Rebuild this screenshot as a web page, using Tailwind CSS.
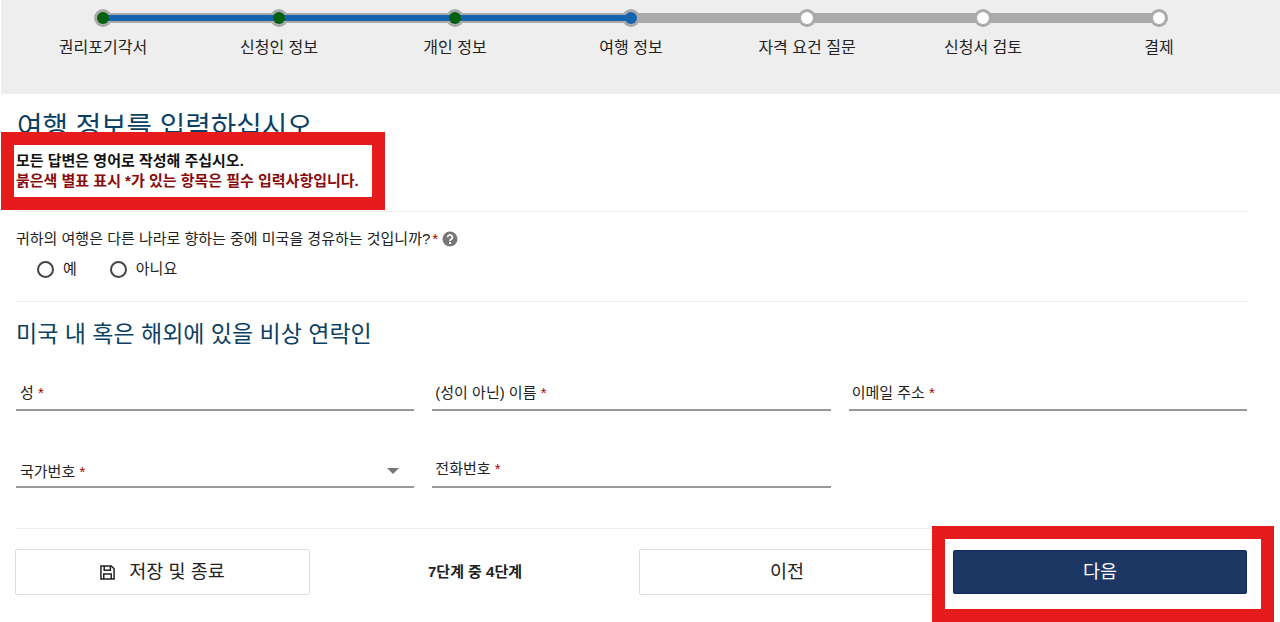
<!doctype html>
<html lang="ko">
    <head>
        <meta charset="UTF-8" />
        <meta name="viewport" content="width=device-width, initial-scale=1.0" />
        <title>여행 정보</title>
        <script src="https://cdn.jsdelivr.net/npm/@tailwindcss/browser@4"></script>
    </head>

    <body class="relative h-[622px] overflow-hidden bg-white font-['Liberation_Sans','Noto_Sans_CJK_KR',sans-serif] text-[#222]">
        <!-- stepper -->
        <div class="ml-px h-[94px] bg-[#eeeeee] pl-[14px] pr-[33px] pt-[9px]">
            <div class="grid grid-cols-7 text-center text-[16px]">
                <div class="relative">
                    <div class="absolute left-1/2 top-[4px] h-[10px] w-full bg-[#aaaaaa]"></div>
                    <div class="relative mx-auto flex h-[18px] w-[18px] items-center justify-center rounded-full bg-[#aaaaaa]"><div class="relative z-20 h-[12px] w-[12px] rounded-full bg-[#066010]"></div></div>
                    <div class="absolute left-1/2 top-[6px] z-10 h-[6px] w-full bg-[#1464ae]"></div>
                    <div class="mt-[11px] leading-[20px]">권리포기각서</div>
                </div>
                <div class="relative">
                    <div class="absolute left-1/2 top-[4px] h-[10px] w-full bg-[#aaaaaa]"></div>
                    <div class="relative mx-auto flex h-[18px] w-[18px] items-center justify-center rounded-full bg-[#aaaaaa]"><div class="relative z-20 h-[12px] w-[12px] rounded-full bg-[#066010]"></div></div>
                    <div class="absolute left-1/2 top-[6px] z-10 h-[6px] w-full bg-[#1464ae]"></div>
                    <div class="mt-[11px] leading-[20px]">신청인 정보</div>
                </div>
                <div class="relative">
                    <div class="absolute left-1/2 top-[4px] h-[10px] w-full bg-[#aaaaaa]"></div>
                    <div class="relative mx-auto flex h-[18px] w-[18px] items-center justify-center rounded-full bg-[#aaaaaa]"><div class="relative z-20 h-[12px] w-[12px] rounded-full bg-[#066010]"></div></div>
                    <div class="absolute left-1/2 top-[6px] z-10 h-[6px] w-full bg-[#1464ae]"></div>
                    <div class="mt-[11px] leading-[20px]">개인 정보</div>
                </div>
                <div class="relative">
                    <div class="absolute left-1/2 top-[4px] h-[10px] w-full bg-[#aaaaaa]"></div>
                    <div class="relative mx-auto flex h-[18px] w-[18px] items-center justify-center rounded-full bg-[#aaaaaa]"><div class="relative z-20 h-[12px] w-[12px] rounded-full bg-[#1464ae]"></div></div>
                    <div class="mt-[11px] leading-[20px]">여행 정보</div>
                </div>
                <div class="relative">
                    <div class="absolute left-1/2 top-[4px] h-[10px] w-full bg-[#aaaaaa]"></div>
                    <div class="relative mx-auto flex h-[18px] w-[18px] items-center justify-center rounded-full bg-[#aaaaaa]"><div class="h-[12px] w-[12px] rounded-full bg-white"></div></div>
                    <div class="mt-[11px] leading-[20px]">자격 요건 질문</div>
                </div>
                <div class="relative">
                    <div class="absolute left-1/2 top-[4px] h-[10px] w-full bg-[#aaaaaa]"></div>
                    <div class="relative mx-auto flex h-[18px] w-[18px] items-center justify-center rounded-full bg-[#aaaaaa]"><div class="h-[12px] w-[12px] rounded-full bg-white"></div></div>
                    <div class="mt-[11px] leading-[20px]">신청서 검토</div>
                </div>
                <div class="relative">
                    <div class="relative mx-auto flex h-[18px] w-[18px] items-center justify-center rounded-full bg-[#aaaaaa]"><div class="h-[12px] w-[12px] rounded-full bg-white"></div></div>
                    <div class="mt-[11px] leading-[20px]">결제</div>
                </div>
            </div>
        </div>

        <div class="pl-4 pr-[33px]">
            <h1 class="pl-px pt-[16px] text-[27.7px] leading-[34px] text-[#0b3f63]">여행 정보를 입력하십시오</h1>

            <div class="relative z-10 mt-[7px] text-[15px] font-bold leading-[20px]">
                <p class="text-[#111]">모든 답변은 영어로 작성해 주십시오.</p>
                <p class="text-[#8a0b0b]">붉은색 별표 표시 *가 있는 항목은 필수 입력사항입니다.</p>
            </div>

            <hr class="-mr-px mt-[20px] border-[#eeeeee]" />

            <div class="mt-[17px] flex items-center text-[15px] leading-[20px]">
                <span>귀하의 여행은 다른 나라로 향하는 중에 미국을 경유하는 것입니까?</span>
                <span class="ml-[2px] text-[#b00000]">*</span>
                <svg class="ml-[4px]" width="16" height="16" viewBox="0 0 16 16">
                    <circle cx="8" cy="8" r="7.5" fill="#777" />
                    <path d="M5.6 6.2a2.4 2.4 0 1 1 3.6 2.1c-.8.5-1.2.9-1.2 1.7" fill="none" stroke="#fff" stroke-width="1.7" />
                    <rect x="7" y="11" width="2" height="2" fill="#fff" />
                </svg>
            </div>
            <div class="mt-[10px] flex items-center pl-[21px] text-[15px] leading-[20px]">
                <span class="h-[17px] w-[17px] rounded-full border-2 border-[#444]"></span>
                <span class="ml-[9px]">예</span>
                <span class="ml-[33px] h-[17px] w-[17px] rounded-full border-2 border-[#444]"></span>
                <span class="ml-[9px]">아니요</span>
            </div>

            <hr class="-mr-px mt-[22px] border-[#eeeeee]" />

            <h2 class="mt-[16px] text-[23px] leading-[32px] text-[#0b3f63]">미국 내 혹은 해외에 있을 비상 연락인</h2>

            <div class="mt-[27px] grid grid-cols-3 gap-x-[18px] gap-y-[43px] text-[15px] leading-[20px]">
                <div class="h-[34px] border-b-2 border-[#999] pl-1 pt-[6px]">성 <span class="text-[#b00000]">*</span></div>
                <div class="h-[34px] border-b-2 border-[#999] pl-[3px] pt-[6px]">(성이 아닌) 이름 <span class="text-[#b00000]">*</span></div>
                <div class="h-[34px] border-b-2 border-[#999] pl-[3px] pt-[6px]">이메일 주소 <span class="text-[#b00000]">*</span></div>
                <div class="flex h-[34px] justify-between border-b-2 border-[#999] pl-1 pr-[15px] pt-[8px]">
                    <span>국가번호 <span class="text-[#b00000]">*</span></span>
                    <svg class="mt-[6px]" width="12" height="6" viewBox="0 0 12 6"><path d="M0 0h12L6 6z" fill="#777" /></svg>
                </div>
                <div class="h-[34px] border-b-2 border-[#999] pl-[3px] pt-[5px]">전화번호 <span class="text-[#b00000]">*</span></div>
            </div>

            <hr class="-mr-px mt-[40px] border-[#eeeeee]" />

            <div class="mt-[20px] flex items-center">
                <button class="-ml-px flex h-[46px] w-[295px] items-center justify-center rounded-[2px] border border-[#ddd] bg-white text-[18.5px]">
                    <svg class="mr-[14px]" width="15" height="15" viewBox="0 0 16 16" fill="none" stroke="#222" stroke-width="1.6">
                        <path d="M1 1h11l3 3v11H1z" />
                        <path d="M4.500 1v4.500h6.500V1M4 15V9.500h8V15" />
                    </svg>
                    저장 및 종료
                </button>
                <span class="ml-[118px] mt-px w-[211px] text-[15px] font-bold text-[#222]">7단계 중 4단계</span>
                <button class="h-[46px] w-[295px] rounded-[2px] border border-[#ddd] bg-white pl-px text-[18.5px]">이전</button>
                <button class="ml-[19px] h-[44px] w-[294px] rounded-[2px] border border-[#102a55] bg-[#1d3764] text-[18.5px] text-white">다음</button>
            </div>
        </div>

        <!-- red annotation boxes lying over the page -->
        <div class="absolute left-px top-[132px] h-[78px] w-[384px] border-[13px] border-[#e61c1c] bg-white"></div>
        <div class="absolute left-[932px] top-[526px] h-[96px] w-[342px] border-[13px] border-[#e61c1c]"></div>
    </body>
</html>
